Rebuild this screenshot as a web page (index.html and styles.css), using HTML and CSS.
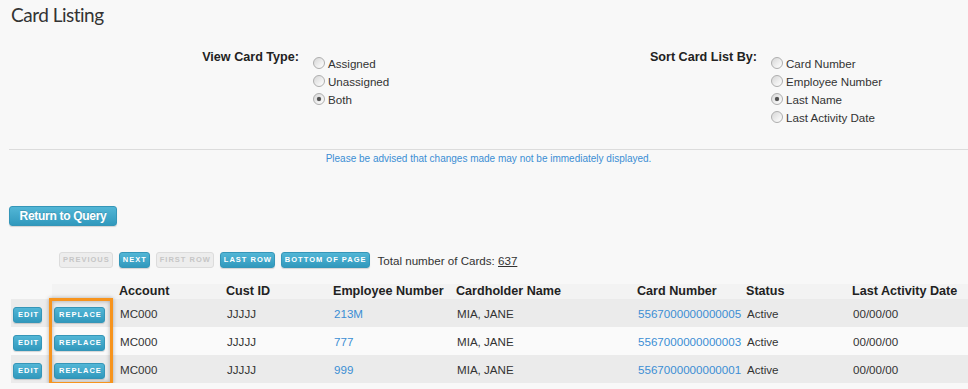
FILE: index.html
```html
<!DOCTYPE html>
<html lang="en">
<head>
    <meta charset="UTF-8">
    <meta name="viewport" content="width=device-width, initial-scale=1.0">
    <title>Card Listing</title>
    <link rel="stylesheet" href="styles.css">
</head>
<body>
    <h1 class="page-title">Card Listing</h1>

    <div class="filters">
        <div class="filter-label">View Card Type:</div>
        <ul class="radio-list">
            <li><label><input type="radio" name="cardType"> Assigned</label></li>
            <li><label><input type="radio" name="cardType"> Unassigned</label></li>
            <li><label><input type="radio" name="cardType" checked> Both</label></li>
        </ul>

        <div class="filter-label">Sort Card List By:</div>
        <ul class="radio-list">
            <li><label><input type="radio" name="sortBy"> Card Number</label></li>
            <li><label><input type="radio" name="sortBy"> Employee Number</label></li>
            <li><label><input type="radio" name="sortBy" checked> Last Name</label></li>
            <li><label><input type="radio" name="sortBy"> Last Activity Date</label></li>
        </ul>
    </div>

    <hr class="divider">
    <p class="notice">Please be advised that changes made may not be immediately displayed.</p>

    <button class="btn btn-query">Return to Query</button>

    <div class="pager">
        <button class="btn-mini" disabled>Previous</button>
        <button class="btn-mini">Next</button>
        <button class="btn-mini" disabled>First Row</button>
        <button class="btn-mini">Last Row</button>
        <button class="btn-mini">Bottom of Page</button>
        <span class="total">Total number of Cards: <a href="#" class="total-link">637</a></span>
    </div>

    <div class="table-wrap">
        <table class="card-table">
            <colgroup>
                <col style="width: 41px">
                <col style="width: 65px">
                <col style="width: 107px">
                <col style="width: 107px">
                <col style="width: 123px">
                <col style="width: 181px">
                <col style="width: 109px">
                <col style="width: 106px">
                <col>
            </colgroup>
            <thead>
                <tr>
                    <th class="blank"></th>
                    <th></th>
                    <th>Account</th>
                    <th>Cust ID</th>
                    <th>Employee Number</th>
                    <th>Cardholder Name</th>
                    <th>Card Number</th>
                    <th>Status</th>
                    <th>Last Activity Date</th>
                </tr>
            </thead>
            <tbody>
                <tr>
                    <td class="btn-cell"><button class="btn-mini">Edit</button></td>
                    <td class="btn-cell"><button class="btn-mini">Replace</button></td>
                    <td>MC000</td>
                    <td>JJJJJ</td>
                    <td><a href="#" class="link">213M</a></td>
                    <td>MIA, JANE</td>
                    <td><a href="#" class="link">5567000000000005</a></td>
                    <td>Active</td>
                    <td>00/00/00</td>
                </tr>
                <tr>
                    <td class="btn-cell"><button class="btn-mini">Edit</button></td>
                    <td class="btn-cell"><button class="btn-mini">Replace</button></td>
                    <td>MC000</td>
                    <td>JJJJJ</td>
                    <td><a href="#" class="link">777</a></td>
                    <td>MIA, JANE</td>
                    <td><a href="#" class="link">5567000000000003</a></td>
                    <td>Active</td>
                    <td>00/00/00</td>
                </tr>
                <tr>
                    <td class="btn-cell"><button class="btn-mini">Edit</button></td>
                    <td class="btn-cell"><button class="btn-mini">Replace</button></td>
                    <td>MC000</td>
                    <td>JJJJJ</td>
                    <td><a href="#" class="link">999</a></td>
                    <td>MIA, JANE</td>
                    <td><a href="#" class="link">5567000000000001</a></td>
                    <td>Active</td>
                    <td>00/00/00</td>
                </tr>
            </tbody>
        </table>
        <div class="highlight"></div>
    </div>
</body>
</html>
```

FILE: styles.css
```css
* {
    margin: 0;
    padding: 0;
    box-sizing: border-box;
}

body {
    font-family: 'Liberation Sans', Arial, sans-serif;
    font-size: 11.6px;
    color: #333;
    background: #f8f8f8;
    overflow: hidden;
}

.page-title {
    font-family: Lato, 'Open Sans', sans-serif;
    font-weight: 400;
    font-size: 19px;
    letter-spacing: -0.5px;
    line-height: 30px;
    color: #333;
    padding-left: 11px;
}

/* filter block */
.filters {
    display: grid;
    grid-template-columns: 299px 160px 270px 1fr;
    column-gap: 14px;
    margin-top: 18px;
}

.filter-label {
    text-align: right;
    font-weight: bold;
    font-size: 12.6px;
    line-height: 18px;
    color: #222;
}

.radio-list {
    list-style: none;
    padding-top: 7px;
}

.radio-list li {
    line-height: 18px;
}

.radio-list label {
    display: flex;
    align-items: flex-start;
}

.radio-list input[type="radio"] {
    appearance: none;
    -webkit-appearance: none;
    width: 12px;
    height: 12px;
    margin: 2px 3px 0 0;
    border: 1px solid #aeaeae;
    border-radius: 50%;
    background: linear-gradient(135deg, #d6d6d6 0%, #f4f4f4 70%, #fdfdfd 100%);
}

.radio-list input[type="radio"]:checked {
    background: radial-gradient(circle, #4a4a4a 0, #5a5a5a 1.8px, rgba(90,90,90,0) 2.6px),
                linear-gradient(135deg, #d6d6d6 0%, #f4f4f4 70%, #fdfdfd 100%);
}

.divider {
    border: 0;
    border-top: 1px solid #dcdcdc;
    margin: 22px 0 0 9px;
}

.notice {
    margin: 2px 0 0 9px;
    text-align: center;
    font-size: 10px;
    line-height: 14px;
    color: #3b8ed4;
}

/* buttons */
.btn {
    font-family: 'Liberation Sans', Arial, sans-serif;
    font-weight: bold;
    color: white;
    background: linear-gradient(#52b6d6, #3199bd);
    border: 1px solid #3596b8;
    border-radius: 3px;
    cursor: pointer;
    text-shadow: 0 -1px 0 rgba(0,0,0,0.15);
}

.btn-query {
    display: block;
    margin: 40px 0 0 9px;
    width: 108px;
    height: 20px;
    font-size: 12px;
    letter-spacing: -0.3px;
    box-shadow: 0 1px 1px rgba(0,0,0,0.15);
}

.btn-mini {
    font-family: 'Liberation Sans', Arial, sans-serif;
    font-weight: bold;
    font-size: 7.5px;
    letter-spacing: 1px;
    text-transform: uppercase;
    height: 16px;
    line-height: 14px;
    padding: 0 2px 0 4px;
    color: white;
    background: linear-gradient(#52b6d6, #3199bd);
    border: 1px solid #3596b8;
    border-radius: 3px;
    box-shadow: 0 1px 1px rgba(0,0,0,0.15);
    cursor: pointer;
}

.btn-mini:disabled {
    color: #c6c6c6;
    background: #ededed;
    border-color: #dcdcdc;
    box-shadow: none;
    cursor: default;
}

.pager {
    display: flex;
    align-items: center;
    gap: 6px;
    margin: 26px 0 0 59px;
}

.pager .btn-mini {
    padding: 0 2px 0 3px;
}

.total {
    margin-left: 2px;
    color: #333;
}

.total-link {
    color: #333;
}

/* table */
.table-wrap {
    position: relative;
    margin: 16px 0 0 11px;
}

.card-table {
    width: 100%;
    table-layout: fixed;
    border-collapse: collapse;
    white-space: nowrap;
}

.card-table th {
    height: 15px;
    padding: 0 0 0 2px;
    text-align: left;
    font-size: 12.6px;
    line-height: 15px;
    color: #222;
    background: #f3f3f3;
}

.card-table th.blank {
    background: transparent;
}

.card-table td {
    height: 28px;
    padding: 0 0 0 3px;
    vertical-align: middle;
    overflow: visible;
}

.card-table tbody tr:nth-child(odd) {
    background: #ebebeb;
}

.card-table tbody tr:nth-child(even) {
    background: #fafafa;
}

.card-table td.btn-cell {
    padding-left: 2px;
}

.card-table td.btn-cell .btn-mini {
    margin-top: 4px;
    vertical-align: middle;
}

.link {
    color: #3b8ed4;
    text-decoration: none;
}

.highlight {
    position: absolute;
    left: 38px;
    top: 14px;
    width: 64px;
    height: 87px;
    border: 3px solid #f7941d;
    box-shadow: 0 0 4px rgba(0,0,0,0.3), inset 0 0 4px rgba(0,0,0,0.3);
    pointer-events: none;
}
```
